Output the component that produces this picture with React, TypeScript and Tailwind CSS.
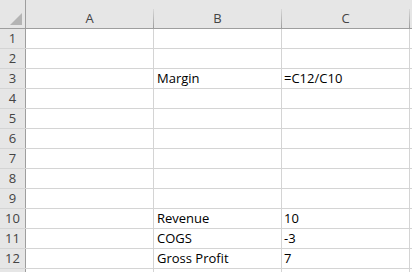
const rows: { b?: string; c?: string }[] = [
  {},
  {},
  { b: "Margin", c: "=C12/C10" },
  {},
  {},
  {},
  {},
  {},
  {},
  { b: "Revenue", c: "10" },
  { b: "COGS", c: "-3" },
  { b: "Gross Profit", c: "7" },
  {},
];

const font = { fontFamily: "'Open Sans', 'Liberation Sans', sans-serif" };

export default function App() {
  return (
    <div className="h-[272px] w-[412px] overflow-hidden bg-white text-[13px] leading-[19px]" style={font}>
      {/* column headers */}
      <div className="flex h-[29px] items-end border-b border-[#9e9e9e] bg-[#e6e6e6] text-[#444]">
        <div className="flex h-full w-[25px] items-end justify-end pb-[3px] pr-[3px]">
          <svg width="12" height="12" viewBox="0 0 12 12">
            <polygon points="0,12 12,12 12,0" fill="#b4b4b4" />
          </svg>
        </div>
        <div className="h-full w-px bg-[#9e9e9e]" />
        {["A", "B", "C"].map((col) => (
          <div key={col} className="flex items-end">
            <div className="w-[127px] text-center">{col}</div>
            <div className="h-[19px] w-px bg-gradient-to-b from-[#d8d8d8] to-[#9e9e9e]" />
          </div>
        ))}
      </div>

      {/* rows */}
      {rows.map((r, i) => (
        <div key={i} className="flex h-[20px] border-b border-[#d4d4d4]">
          <div className="w-[25px] bg-[#e6e6e6] text-center text-[#444]">{i < 12 ? i + 1 : ""}</div>
          <div className="w-px bg-[#9e9e9e]" />
          <div className="w-[127px]" />
          <div className="w-px bg-[#d4d4d4]" />
          <div className="w-[127px] whitespace-nowrap pl-[3px] text-black">{r.b}</div>
          <div className="w-px bg-[#d4d4d4]" />
          <div className="w-[127px] whitespace-nowrap pl-[2px] text-black">{r.c}</div>
          <div className="w-px bg-[#d4d4d4]" />
        </div>
      ))}
    </div>
  );
}
